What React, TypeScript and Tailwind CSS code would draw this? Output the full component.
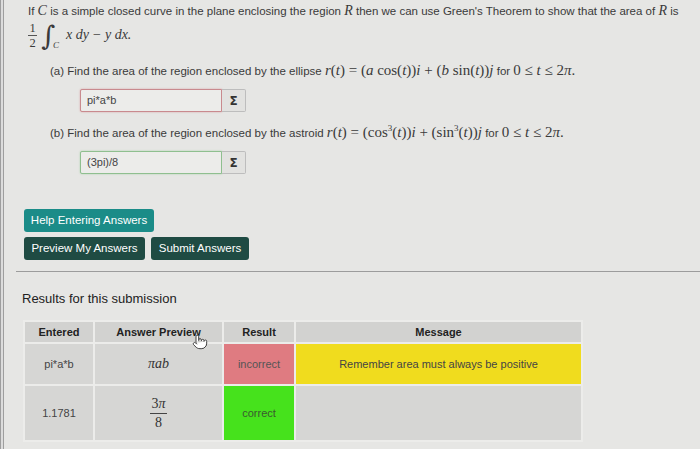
import React from "react";
import { Pointer } from "lucide-react";

const M = ({ children, className = "" }: { children: React.ReactNode; className?: string }) => (
  <span className={`font-['Liberation_Serif','DejaVu_Serif',serif] leading-none ${className}`}>{children}</span>
);
const I = ({ children }: { children: React.ReactNode }) => (
  <span className="font-['Liberation_Serif','DejaVu_Serif',serif] italic leading-none">{children}</span>
);
const Sup = ({ children }: { children: React.ReactNode }) => (
  <span className="relative -top-[6px] text-[9px] leading-none">{children}</span>
);

function AnswerBox({ value, tone }: { value: string; tone: "red" | "green" }) {
  return (
    <div className="flex h-[23px]">
      <div
        className={`w-[142px] h-full flex items-center pl-[6px] text-[11px] text-[#444] bg-[#ececea] border rounded-l-[2px] ${
          tone === "red" ? "border-[#c98a8e] shadow-[0_0_2px_#d9a0a4]" : "border-[#8fbf8f] shadow-[0_0_2px_#a8d0a8]"
        }`}
      >
        {value}
      </div>
      <div className="w-[24px] h-full flex items-center justify-center bg-[#e2e2e0] border border-l-0 border-[#bdbdbd] rounded-r-[2px] text-[12px] font-bold text-[#333] font-['DejaVu_Sans',sans-serif]">
        Σ
      </div>
    </div>
  );
}

export default function App() {
  return (
    <div className="w-[700px] h-[449px] bg-[#e6e6e4] overflow-hidden flex font-['Liberation_Sans',Arial,sans-serif] text-[#333]">
      <div className="w-[4px] h-full border-l border-r border-[#9e9e9e] bg-[#dcdcdc]" />
      <div className="flex-1 flex flex-col relative">
        <div className="pl-[24px] pt-[4px] h-[18px] text-[11.5px] leading-[14px] text-[#3a3a3a] whitespace-nowrap">
          If <I><span className="text-[14px]">C</span></I> is a simple closed curve in the plane enclosing the region{" "}
          <I><span className="text-[14px]">R</span></I> then we can use Green's Theorem to show that the area of{" "}
          <I><span className="text-[14px]">R</span></I> is
        </div>
        <div className="pl-[24px] mt-[2px] flex items-center h-[30px] text-[#3a3a3a]">
          <span className="inline-flex flex-col items-center font-['Liberation_Serif',serif] text-[12.5px] leading-[12px]">
            <span>1</span>
            <span className="w-[9px] border-t border-[#555] my-[1px]" />
            <span>2</span>
          </span>
          <span className="relative ml-[4px] mr-[11px] font-['DejaVu_Serif',serif] text-[27px] leading-[27px] font-light">
            ∫
            <span className="absolute left-[12px] top-[19px] text-[9px] leading-[9px] font-['Liberation_Serif',serif] italic">C</span>
          </span>
          <M className="italic text-[14px]">x dy</M>
          <M className="text-[14px] mx-[4px]">−</M>
          <M className="italic text-[14px]">y dx.</M>
        </div>

        <div className="pl-[46px] mt-[13px] h-[16px] leading-[16px] text-[11.5px] text-[#3a3a3a] whitespace-nowrap">
          (a) Find the area of the region enclosed by the ellipse{" "}
          <M className="text-[15px]">
            <i>r</i>(<i>t</i>) = (<i>a</i> cos(<i>t</i>))<i>i</i> + (<i>b</i> sin(<i>t</i>))<i>j</i>
          </M>{" "}
          for <M className="text-[15px]">0 ≤ <i>t</i> ≤ 2<i>π</i>.</M>
        </div>
        <div className="pl-[76px] mt-[10px]">
          <AnswerBox value="pi*a*b" tone="red" />
        </div>

        <div className="pl-[46px] mt-[13px] h-[16px] leading-[16px] text-[11.5px] text-[#3a3a3a] whitespace-nowrap">
          (b) Find the area of the region enclosed by the astroid{" "}
          <M className="text-[15px]">
            <i>r</i>(<i>t</i>) = (cos<Sup>3</Sup>(<i>t</i>))<i>i</i> + (sin<Sup>3</Sup>(<i>t</i>))<i>j</i>
          </M>{" "}
          for <M className="text-[15px]">0 ≤ <i>t</i> ≤ 2<i>π</i>.</M>
        </div>
        <div className="pl-[76px] mt-[10px]">
          <AnswerBox value="(3pi)/8" tone="green" />
        </div>

        <div className="pl-[20px] mt-[35px] flex flex-col gap-[5px] text-[11.5px] text-white">
          <div className="w-[130px] h-[23px] rounded-[3px] bg-[#1b8c88] flex items-center justify-center">
            Help Entering Answers
          </div>
          <div className="flex gap-[6px]">
            <div className="w-[121px] h-[23px] rounded-[3px] bg-[#1f4b43] flex items-center justify-center">
              Preview My Answers
            </div>
            <div className="w-[98px] h-[23px] rounded-[3px] bg-[#1f4b43] flex items-center justify-center">
              Submit Answers
            </div>
          </div>
        </div>

        <div className="ml-[12px] mt-[11px] border-t border-[#9c9c9c]" />

        <div className="pl-[18px] mt-[19px] h-[16px] text-[13px] leading-[16px] text-[#222]">Results for this submission</div>

        <div className="ml-[19px] mt-[13px] w-[558px]">
          <table className="w-full border-collapse border border-[#a8a8a8] text-[11px] text-[#444] table-fixed">
            <colgroup>
              <col className="w-[70px]" />
              <col className="w-[129px]" />
              <col className="w-[72px]" />
              <col className="w-[287px]" />
            </colgroup>
            <thead>
              <tr className="h-[22px] bg-[#d2d2d0] text-[#222] font-bold">
                <th className="border-2 border-[#ececea] font-bold">Entered</th>
                <th className="border-2 border-[#ececea] font-bold">Answer Preview</th>
                <th className="border-2 border-[#ececea] font-bold">Result</th>
                <th className="border-2 border-[#ececea] font-bold">Message</th>
              </tr>
            </thead>
            <tbody>
              <tr className="h-[42px] text-center">
                <td className="border-2 border-[#ececea] bg-[#d6d6d4]">pi*a*b</td>
                <td className="border-2 border-[#ececea] bg-[#d6d6d4]">
                  <M className="italic text-[14px] text-[#333]">πab</M>
                </td>
                <td className="border-2 border-[#ececea] bg-[#df7b81] text-[#555]">incorrect</td>
                <td className="border-2 border-[#ececea] bg-[#f0dc1e] text-[#444]">Remember area must always be positive</td>
              </tr>
              <tr className="h-[56px] text-center">
                <td className="border-2 border-[#ececea] bg-[#d6d6d4]">1.1781</td>
                <td className="border-2 border-[#ececea] bg-[#d6d6d4]">
                  <span className="inline-flex flex-col items-center font-['Liberation_Serif',serif] text-[14px] leading-[14px] text-[#333]">
                    <span>
                      3<i>π</i>
                    </span>
                    <span className="w-[17px] border-t border-[#444] my-[2px]" />
                    <span>8</span>
                  </span>
                </td>
                <td className="border-2 border-[#ececea] bg-[#46e21c] text-[#3a5a30]">correct</td>
                <td className="border-2 border-[#ececea] bg-[#d6d6d4]" />
              </tr>
            </tbody>
          </table>
        </div>

        <div className="absolute left-[188px] top-[334px]">
          <Pointer size={16} strokeWidth={1.5} className="text-[#444] fill-white" />
        </div>
      </div>
    </div>
  );
}
